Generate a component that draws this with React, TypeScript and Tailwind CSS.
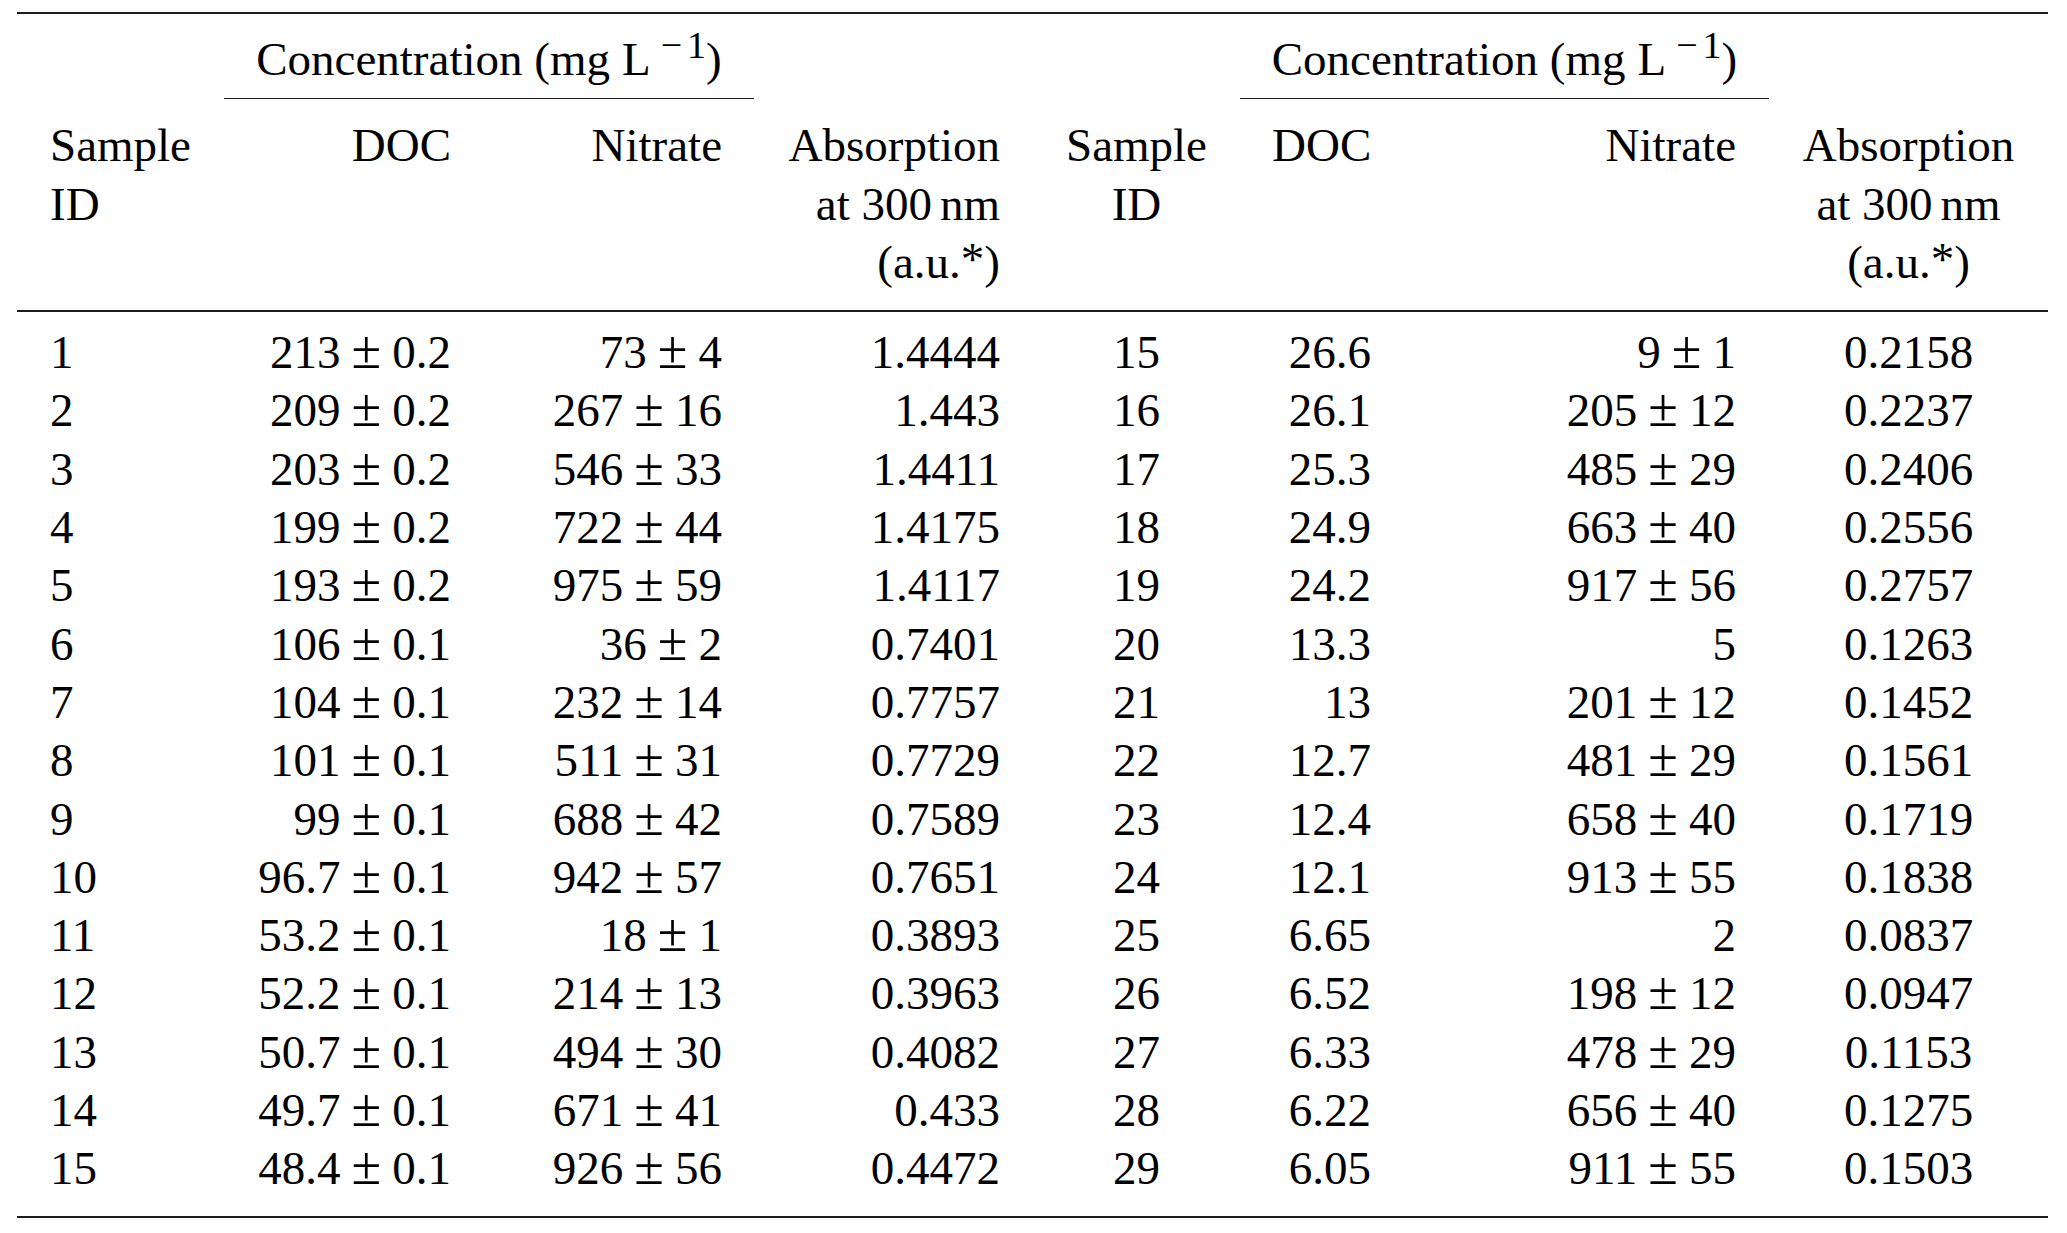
import React from "react"

type Row = [string, string, string, string]

const left: Row[] = [
  ["1", "213±0.2", "73±4", "1.4444"],
  ["2", "209±0.2", "267±16", "1.443"],
  ["3", "203±0.2", "546±33", "1.4411"],
  ["4", "199±0.2", "722±44", "1.4175"],
  ["5", "193±0.2", "975±59", "1.4117"],
  ["6", "106±0.1", "36±2", "0.7401"],
  ["7", "104±0.1", "232±14", "0.7757"],
  ["8", "101±0.1", "511±31", "0.7729"],
  ["9", "99±0.1", "688±42", "0.7589"],
  ["10", "96.7±0.1", "942±57", "0.7651"],
  ["11", "53.2±0.1", "18±1", "0.3893"],
  ["12", "52.2±0.1", "214±13", "0.3963"],
  ["13", "50.7±0.1", "494±30", "0.4082"],
  ["14", "49.7±0.1", "671±41", "0.433"],
  ["15", "48.4±0.1", "926±56", "0.4472"],
]

const right: Row[] = [
  ["15", "26.6", "9±1", "0.2158"],
  ["16", "26.1", "205±12", "0.2237"],
  ["17", "25.3", "485±29", "0.2406"],
  ["18", "24.9", "663±40", "0.2556"],
  ["19", "24.2", "917±56", "0.2757"],
  ["20", "13.3", "5", "0.1263"],
  ["21", "13", "201±12", "0.1452"],
  ["22", "12.7", "481±29", "0.1561"],
  ["23", "12.4", "658±40", "0.1719"],
  ["24", "12.1", "913±55", "0.1838"],
  ["25", "6.65", "2", "0.0837"],
  ["26", "6.52", "198±12", "0.0947"],
  ["27", "6.33", "478±29", "0.1153"],
  ["28", "6.22", "656±40", "0.1275"],
  ["29", "6.05", "911±55", "0.1503"],
]

// value with a ± gets the math spacing round the sign
function Val({ v }: { v: string }) {
  const parts = v.split("±")
  if (parts.length < 2) return <>{v}</>
  return (
    <>
      {parts[0]}
      <span className="mx-[11px] text-[54px] leading-[0]">±</span>
      {parts[1]}
    </>
  )
}

function Conc() {
  return (
    <span>
      Concentration (mg
      <span className="ml-[12px]">L</span>
      <span className="relative -top-[17px] ml-[10px] text-[38px] leading-none">
        −<span className="ml-[5px]">1</span>
      </span>
      )
    </span>
  )
}

const grid = "grid grid-cols-[207px_260px_270px_279px_207px_160px_369px_279px]"

export default function App() {
  return (
    <div
      className="min-h-screen bg-white pl-[17px] pt-[12px] text-black"
      style={{ fontFamily: '"Liberation Serif", "Times New Roman", serif' }}
    >
      <div className="w-[2031px] border-y-2 border-[#1c1c1c] text-[47px] leading-[58.3px]">
        {/* spanning heading */}
        <div className={`${grid} pt-[16px]`}>
          <div />
          <div className="col-span-2 border-b-[1.5px] border-[#1c1c1c] pb-[10px] text-center">
            <Conc />
          </div>
          <div />
          <div />
          <div className="col-span-2 border-b-[1.5px] border-[#1c1c1c] pb-[10px] text-center">
            <Conc />
          </div>
          <div />
        </div>

        {/* column heads */}
        <div className={`${grid} mt-[17px] border-b-2 border-[#1c1c1c] pb-[19px]`}>
          <div className="pl-[33px]">
            Sample
            <br />
            ID
          </div>
          <div className="pr-[33px] text-right">DOC</div>
          <div className="pr-[32px] text-right">Nitrate</div>
          <div className="pr-[33px] text-right">
            Absorption
            <br />
            at 300<span className="ml-[8px]">nm</span>
            <br />
            (a.u.<span className="relative -top-[3px]">*</span>)
          </div>
          <div className="text-center">
            Sample
            <br />
            ID
          </div>
          <div className="pl-[32px]">DOC</div>
          <div className="pr-[33px] text-right">Nitrate</div>
          <div className="text-center">
            Absorption
            <br />
            at 300<span className="ml-[8px]">nm</span>
            <br />
            (a.u.<span className="relative -top-[3px]">*</span>)
          </div>
        </div>

        {/* body */}
        <div className={`${grid} pt-[11px] pb-[18px]`}>
          {left.map((l, i) => {
            const r = right[i]
            return (
              <React.Fragment key={i}>
                <div className="pl-[33px]">{l[0]}</div>
                <div className="pr-[33px] text-right">
                  <Val v={l[1]} />
                </div>
                <div className="pr-[32px] text-right">
                  <Val v={l[2]} />
                </div>
                <div className="pr-[33px] text-right">{l[3]}</div>
                <div className="text-center">{r[0]}</div>
                <div className="pr-[29px] text-right">{r[1]}</div>
                <div className="pr-[33px] text-right">
                  <Val v={r[2]} />
                </div>
                <div className="text-center">{r[3]}</div>
              </React.Fragment>
            )
          })}
        </div>
      </div>
    </div>
  )
}
